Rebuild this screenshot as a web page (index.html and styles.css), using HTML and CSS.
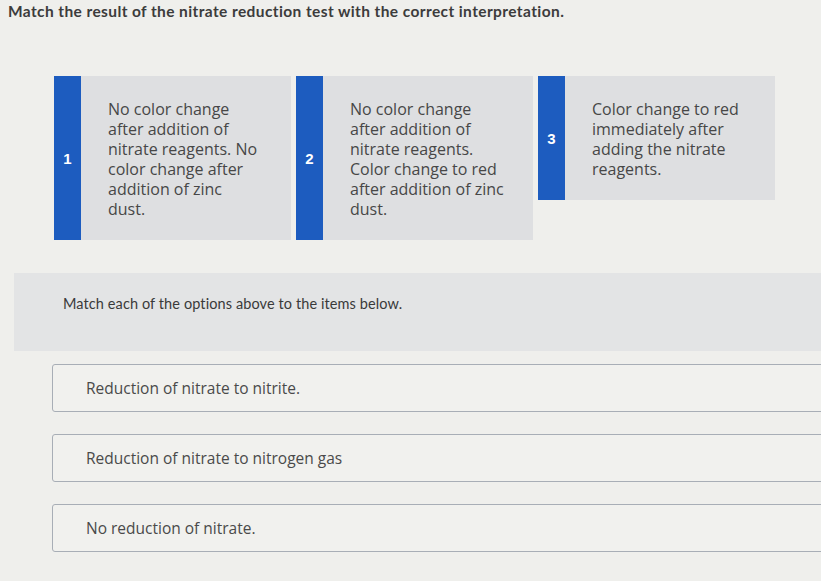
FILE: index.html
```html
<!DOCTYPE html>
<html lang="en">
<head>
<meta charset="utf-8">
<title>Nitrate reduction test</title>
<link rel="stylesheet" href="styles.css">
</head>
<body>
<h1 class="title">Match the result of the nitrate reduction test with the correct interpretation.</h1>

<div class="options">
  <div class="card">
    <div class="num">1</div>
    <div class="card-body">No color change<br>after addition of<br>nitrate reagents. No<br>color change after<br>addition of zinc<br>dust.</div>
  </div>
  <div class="card">
    <div class="num">2</div>
    <div class="card-body">No color change<br>after addition of<br>nitrate reagents.<br>Color change to red<br>after addition of zinc<br>dust.</div>
  </div>
  <div class="card">
    <div class="num">3</div>
    <div class="card-body">Color change to red<br>immediately after<br>adding the nitrate<br>reagents.</div>
  </div>
</div>

<div class="prompt">Match each of the options above to the items below.</div>

<div class="targets">
  <div class="target">Reduction of nitrate to nitrite.</div>
  <div class="target">Reduction of nitrate to nitrogen gas</div>
  <div class="target">No reduction of nitrate.</div>
</div>
</body>
</html>
```

FILE: styles.css
```css
html, body {
  margin: 0;
  padding: 0;
}

body {
  width: 821px;
  height: 581px;
  overflow: hidden;
  background: #efefec;
  font-family: "Open Sans", "Liberation Sans", sans-serif;
  color: #444;
}

.title {
  margin: 0;
  padding: 1px 0 0 8px;
  font-family: Lato, "Liberation Sans", sans-serif;
  font-weight: 700;
  font-size: 15.5px;
  letter-spacing: 0.4px;
  line-height: 20px;
  color: #3c3c3c;
  white-space: nowrap;
}

.options {
  display: flex;
  align-items: flex-start;
  gap: 5px;
  margin-top: 55px;
  padding-left: 54px;
}

.card {
  display: flex;
  align-items: stretch;
  width: 237px;
}

.num {
  width: 27px;
  flex: none;
  display: flex;
  align-items: center;
  justify-content: center;
  background: #1d5cbf;
  color: #fff;
  font-family: "Liberation Sans", Arial, sans-serif;
  font-weight: 700;
  font-size: 15px;
}

.card-body {
  flex: 1;
  background: #dedfe1;
  padding: 23px 10px 21px 27px;
  font-size: 16px;
  line-height: 20px;
  color: #474747;
  white-space: nowrap;
}

.prompt {
  margin: 33px -20px 0 14px;
  padding: 21px 0 37px 49px;
  background: #e3e4e5;
  font-family: Lato, "Liberation Sans", sans-serif;
  font-size: 14.5px;
  letter-spacing: 0.1px;
  line-height: 20px;
  color: #3a3a3a;
}

.targets {
  display: flex;
  flex-direction: column;
  gap: 22px;
  margin: 13px -20px 0 52px;
}

.target {
  height: 46px;
  display: flex;
  align-items: center;
  padding-left: 33px;
  border: 1.5px solid #a8aeb6;
  border-radius: 3px;
  background: #f1f1ee;
  font-size: 15.5px;
  color: #4a4a4a;
}
```
